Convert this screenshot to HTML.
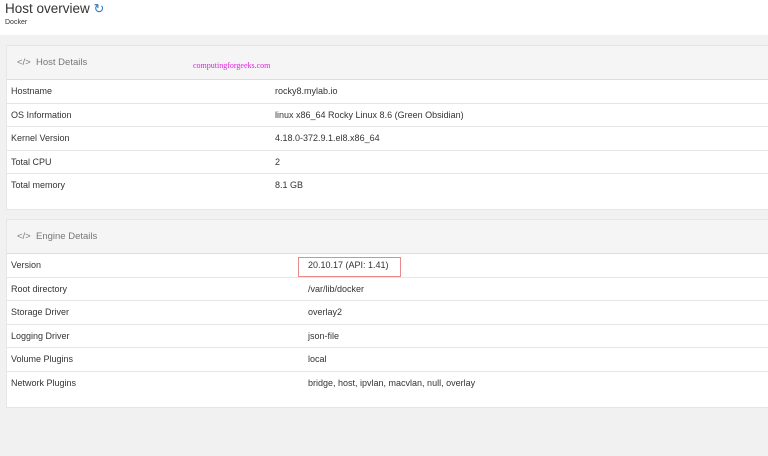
<!DOCTYPE html>
<html><head><style>
body{margin:0;width:768px;height:456px;background:#f1f1f1;font-family:"Liberation Sans",sans-serif;overflow:hidden;position:relative}
.top{position:absolute;left:0;top:0;width:768px;height:35px;background:#fff}
h1{position:absolute;left:5px;top:1px;margin:0;font-size:13.5px;font-weight:normal;color:#333}
.sub{position:absolute;left:5px;top:19px;font-size:7px;color:#333}
.panel{position:absolute;left:6px;width:762px;background:#fff;border:1px solid #e6e6e6}
.hd{height:33px;background:#f5f5f5;border-bottom:1px solid #ddd;font-size:9.5px;color:#777;line-height:33px;padding-left:10px}
.row{height:22.5px;border-bottom:1px solid #e6e6e6;font-size:9px;color:#333;line-height:22.5px;position:relative}
.row span{position:absolute;left:4px}
.row b{position:absolute;font-weight:normal}
.box{position:absolute;left:298px;top:257px;width:101px;height:18px;border:1.5px solid #e88a8a}
.wm{position:absolute;left:193px;top:61px;font-family:"Liberation Serif",serif;font-size:8px;color:#e020e0}
</style></head><body>
<div class="top"></div>
<h1>Host overview <span style="color:#337ab7;font-size:13px">&#x21bb;</span></h1>
<div class="sub">Docker</div>
<div class="panel" style="top:45px;height:163px">
<div class="hd">&lt;/&gt;&nbsp; Host Details</div>
<div class="row"><span>Hostname</span><b style="left:268px">rocky8.mylab.io</b></div>
<div class="row"><span>OS Information</span><b style="left:268px">linux x86_64 Rocky Linux 8.6 (Green Obsidian)</b></div>
<div class="row"><span>Kernel Version</span><b style="left:268px">4.18.0-372.9.1.el8.x86_64</b></div>
<div class="row"><span>Total CPU</span><b style="left:268px">2</b></div>
<div class="row" style="border:0"><span>Total memory</span><b style="left:268px">8.1 GB</b></div>
</div>
<div class="wm">computingforgeeks.com</div>
<div class="panel" style="top:219px;height:187px">
<div class="hd">&lt;/&gt;&nbsp; Engine Details</div>
<div class="row"><span>Version</span><b style="left:301px">20.10.17 (API: 1.41)</b></div>
<div class="row"><span>Root directory</span><b style="left:301px">/var/lib/docker</b></div>
<div class="row"><span>Storage Driver</span><b style="left:301px">overlay2</b></div>
<div class="row"><span>Logging Driver</span><b style="left:301px">json-file</b></div>
<div class="row"><span>Volume Plugins</span><b style="left:301px">local</b></div>
<div class="row" style="border:0"><span>Network Plugins</span><b style="left:301px">bridge, host, ipvlan, macvlan, null, overlay</b></div>
</div>
<div class="box"></div>
</body></html>
